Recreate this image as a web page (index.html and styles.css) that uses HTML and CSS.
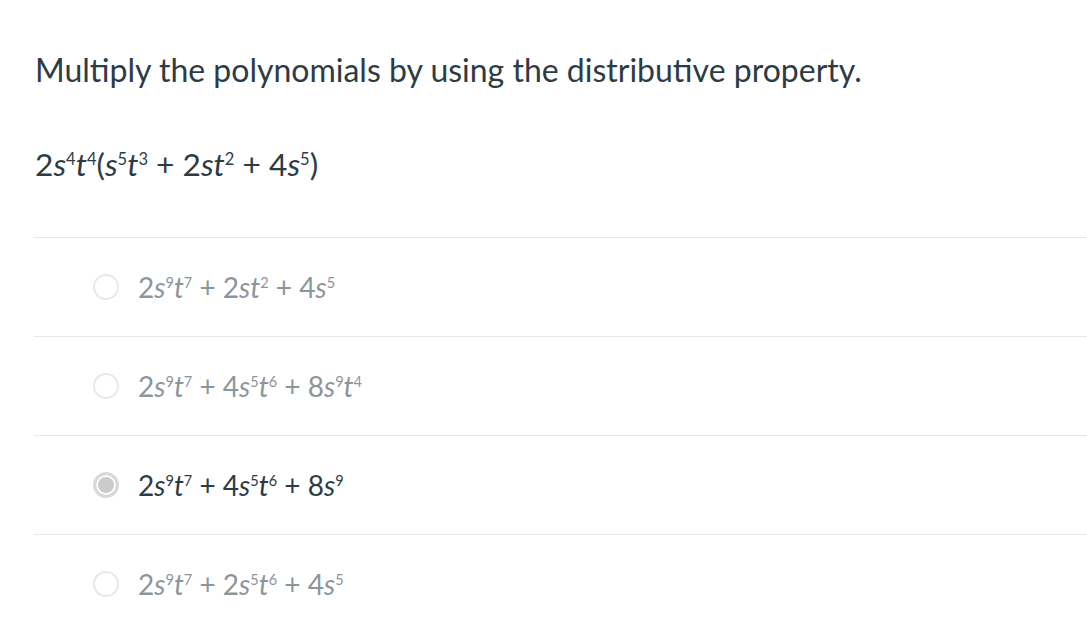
FILE: index.html
```html
<!DOCTYPE html>
<html>
<head>
<meta charset="utf-8">
<link rel="stylesheet" href="styles.css">
</head>
<body>
<div class="quiz">
  <p class="prompt">Multiply the polynomials by using the distributive property.</p>
  <p class="expr">2<i>s</i><sup>4</sup><i>t</i><sup>4</sup>(<i>s</i><sup>5</sup><i>t</i><sup>3</sup> + 2<i>st</i><sup>2</sup> + 4<i>s</i><sup>5</sup>)</p>
  <div class="answers">
    <div class="answer">
      <span class="radio"></span>
      <span class="math">2<i>s</i><sup>9</sup><i>t</i><sup>7</sup> + 2<i>st</i><sup>2</sup> + 4<i>s</i><sup>5</sup></span>
    </div>
    <div class="answer">
      <span class="radio"></span>
      <span class="math">2<i>s</i><sup>9</sup><i>t</i><sup>7</sup> + 4<i>s</i><sup>5</sup><i>t</i><sup>6</sup> + 8<i>s</i><sup>9</sup><i>t</i><sup>4</sup></span>
    </div>
    <div class="answer selected">
      <span class="radio"></span>
      <span class="math">2<i>s</i><sup>9</sup><i>t</i><sup>7</sup> + 4<i>s</i><sup>5</sup><i>t</i><sup>6</sup> + 8<i>s</i><sup>9</sup></span>
    </div>
    <div class="answer">
      <span class="radio"></span>
      <span class="math">2<i>s</i><sup>9</sup><i>t</i><sup>7</sup> + 2<i>s</i><sup>5</sup><i>t</i><sup>6</sup> + 4<i>s</i><sup>5</sup></span>
    </div>
  </div>
</div>
</body>
</html>
```
FILE: styles.css
```css
html, body {
  margin: 0;
  padding: 0;
  background: #ffffff;
}
body {
  font-family: Lato, "Open Sans", sans-serif;
  color: #2d3b45;
}
.quiz {
  padding: 46px 0 0 34px;
}
.prompt {
  margin: 0 0 0 1px;
  font-size: 32px;
  line-height: 48px;
}
.expr {
  margin: 48px 0 0 1px;
  font-size: 31.7px;
  line-height: 44px;
  white-space: nowrap;
}
i {
  font-style: italic;
}
sup {
  font-size: 0.52em;
  line-height: 0;
  vertical-align: 0.66em;
}
.answers {
  margin-top: 51px;
}
.answer {
  display: flex;
  align-items: center;
  gap: 19px;
  height: 98px;
  border-top: 1px solid #e6e6e6;
  padding-left: 59px;
  color: #8d959c;
}
.answer .math {
  font-size: 28px;
  white-space: nowrap;
  flex: none;
}
.answer.selected {
  color: #2d3b45;
}
.radio {
  width: 26px;
  height: 26px;
  border-radius: 50%;
  border: 2px solid #e8e8e8;
  box-sizing: border-box;
  background: #fff;
  flex: none;
}
.answer.selected .radio {
  border: 3px solid #d9d9d9;
  box-shadow: inset 0 0 0 2px #fff;
  background: #cbcbcb;
}
```
